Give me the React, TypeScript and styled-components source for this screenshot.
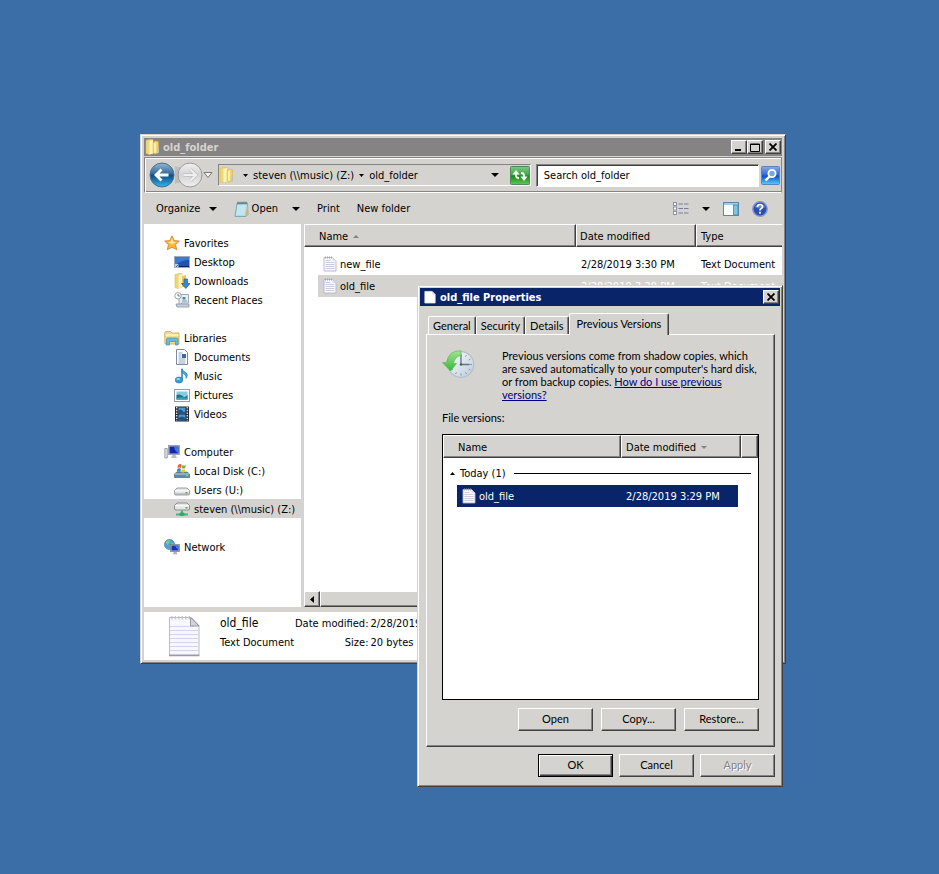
import React from 'react';
import styled, { createGlobalStyle, css } from 'styled-components';

const face = '#d5d3cf';
const ui = "'DejaVu Sans Condensed', 'DejaVu Sans', sans-serif";
const sans = "Lato, 'Liberation Sans', sans-serif";

const GlobalStyle = createGlobalStyle`
  * { box-sizing: border-box; }
  body { margin: 0; background: #3b6ea7; }
  button, input { font: inherit; color: inherit; }
  svg { display: block; flex: none; }
`;

const raised = css`
  border: 1px solid;
  border-color: #fff #404040 #404040 #fff;
  box-shadow: inset -1px -1px 0 #858384;
`;

/* ---------- desktop and window frames ---------- */

const Desktop = styled.main`
  position: relative;
  min-height: 100vh;
  background: #3b6ea7;
  overflow: hidden;
  font: 11px/13px ${ui};
  color: #000;
`;

const Frame = styled.section`
  position: absolute;
  display: flex;
  flex-direction: column;
  padding: 2px;
  background: ${face};
  border: 1px solid;
  border-color: ${face} #404040 #404040 ${face};
  box-shadow: inset 1px 1px 0 #fff, inset -1px -1px 0 #858384;
`;

const ExplorerFrame = styled(Frame)`
  top: 134px;
  left: 140px;
  right: 153px;
  padding: 3px;
`;

const DialogFrame = styled(Frame)`
  top: 285px;
  left: 417px;
  right: 156px;
`;

const TitleBar = styled.header<{ $active?: boolean }>`
  display: flex;
  align-items: center;
  gap: ${(p) => (p.$active ? 4 : 2)}px;
  height: 18px;
  padding: 0 1px 0 ${(p) => (p.$active ? 4 : 1)}px;
  background: ${(p) => (p.$active ? '#0a246a' : '#858384')};
  color: ${(p) => (p.$active ? '#fff' : '#d5d3cf')};
`;

const Title = styled.h1`
  flex: 1;
  margin: 0;
  padding-top: 1px;
  font: bold 11px/14px ${ui};
`;

const CaptionGroup = styled.div`
  display: flex;
`;

const CaptionButton = styled.button`
  ${raised}
  display: flex;
  align-items: center;
  justify-content: center;
  width: 16px;
  height: 14px;
  padding: 0;
  background: ${face};
  color: #000;
  & + & + & { margin-left: 2px; }
`;

/* ---------- explorer bars ---------- */

const NavBand = styled.div`
  display: flex;
  align-items: center;
  height: 36px;
  margin-top: 1px;
  padding: 0 1px 0 4px;
  border: 1px solid;
  border-color: #858384 #858384 #fff #858384;
  box-shadow: inset 1px 1px 0 #fff, inset 0 -1px 0 #858384;
`;

const PlainButton = styled.button`
  display: flex;
  align-items: center;
  gap: 2px;
  padding: 0;
  border: 0;
  background: none;
`;

const HistoryButtons = styled.div`
  display: flex;
  align-items: center;
  width: 69px;
`;

const AddressBar = styled.div`
  display: flex;
  align-items: center;
  flex: 60 1 0;
  min-width: 0;
  height: 22px;
  border: 1px solid;
  border-color: #858384 #fff #fff #858384;
`;

const Crumbs = styled.nav`
  display: flex;
  align-items: center;
  flex: 1;
  gap: 5px;
  padding-left: 8px;
  white-space: nowrap;
`;

const Crumb = styled.a`
  color: inherit;
  text-decoration: none;
`;

const Dropper = styled(PlainButton)`
  margin-right: 11px;
`;

const SearchBox = styled.input`
  flex: 40 1 0;
  min-width: 0;
  height: 23px;
  margin: 0 2px 0 5px;
  padding: 0 7px;
  border: 1px solid;
  border-color: #858384 #fff #fff #858384;
  border-radius: 0;
  outline: 0;
  background: #fff;
  box-shadow: inset 1px 1px 0 #404040;
  &::placeholder { color: #000; opacity: 1; }
`;

const CommandBar = styled.div`
  display: flex;
  align-items: center;
  height: 31px;
  padding: 0 14px 0 12px;
`;

const CommandGroup = styled.div`
  display: flex;
  flex: 1;
  align-items: center;
  gap: 17px;
`;

const SplitButton = styled.div`
  display: flex;
  gap: 14px;
`;

const ViewGroup = styled.div`
  display: flex;
  align-items: center;
  gap: 13px;
`;

/* ---------- explorer body ---------- */

const Body = styled.div`
  display: flex;
  gap: 3px;
  min-height: 383px;
`;

const NavPane = styled.nav`
  flex: none;
  width: 157px;
  padding: 9px 0;
  background: #fff;
`;

const NavGroup = styled.ul`
  margin: 0 0 19px;
  padding: 0;
  list-style: none;
`;

const NavItem = styled.a<{ $child?: boolean; $selected?: boolean }>`
  display: flex;
  align-items: center;
  gap: 4px;
  height: 19px;
  padding-left: ${(p) => (p.$child ? 30 : 20)}px;
  background: ${(p) => (p.$selected ? face : 'none')};
  color: inherit;
  text-decoration: none;
  white-space: nowrap;
`;

const NavLabel = styled.span`
  padding-top: 2px;
`;

const FilePane = styled.div`
  display: flex;
  flex: 1;
  flex-direction: column;
  justify-content: space-between;
  min-width: 0;
  overflow: hidden;
  background: #fff;
`;

const FileTable = styled.table`
  width: 100%;
  border-collapse: separate;
  border-spacing: 0;
  table-layout: fixed;
  tbody::before { content: ''; display: block; height: 6px; }
`;

const Column = styled.col<{ $width?: number }>`
  width: ${(p) => (p.$width ? p.$width + 'px' : 'auto')};
`;

const HeadCell = styled.th<{ $indent?: number; $open?: boolean }>`
  height: 23px;
  padding: 2px 0 0 ${(p) => p.$indent ?? 4}px;
  border: solid;
  border-width: 1px ${(p) => (p.$open ? 0 : 1)}px 1px 1px;
  border-color: #fff #404040 #404040 #fff;
  background: ${face};
  box-shadow: inset ${(p) => (p.$open ? 0 : -1)}px -1px 0 #858384;
  font-weight: normal;
  text-align: left;
  white-space: nowrap;
`;

const HeadLabel = styled.span`
  display: flex;
  align-items: center;
  gap: 5px;
`;

const Cell = styled.td<{ $selected?: boolean; $faded?: boolean }>`
  height: 22px;
  padding: 0 0 0 5px;
  background: ${(p) => (p.$selected ? face : 'none')};
  color: ${(p) => (p.$faded ? '#fff' : '#000')};
  white-space: nowrap;
`;

const FileName = styled.span`
  display: flex;
  align-items: center;
  gap: 3px;
`;

const ScrollBar = styled.div`
  display: flex;
  height: 16px;
  background: #eae9e6;
`;

const ScrollButton = styled(CaptionButton)`
  height: 16px;
`;

const ScrollThumb = styled.div`
  ${raised}
  width: 300px;
  background: ${face};
`;

const Details = styled.footer`
  display: flex;
  align-items: flex-start;
  min-height: 48px;
  margin-top: 5px;
  padding: 3px 0 3px 24px;
  background: #fff;
`;

const DetailName = styled.div`
  display: flex;
  flex-direction: column;
  gap: 4px;
  width: 75px;
  margin-left: 19px;
  padding-top: 1px;
  line-height: 15px;
  white-space: nowrap;
`;

const DetailTitle = styled.strong`
  font-size: 12px;
  font-weight: normal;
`;

const DetailFacts = styled.dl`
  display: grid;
  grid-template-columns: auto auto;
  gap: 4px 2px;
  margin: 0;
  padding-top: 1px;
  line-height: 15px;
  white-space: nowrap;
`;

const Fact = styled.dt`
  text-align: right;
`;

const FactValue = styled.dd`
  margin: 0;
`;

/* ---------- properties dialog ---------- */

const DialogBody = styled.div`
  display: flex;
  flex-direction: column;
  padding: 7px 5px 7px 6px;
  font: 11px/13px ${sans};
`;

const Tabs = styled.div`
  display: flex;
  align-items: flex-end;
  padding-left: 2px;
`;

const Tab = styled.button<{ $active?: boolean }>`
  position: relative;
  height: ${(p) => (p.$active ? 22 : 18)}px;
  margin-bottom: ${(p) => (p.$active ? -1 : 0)}px;
  padding: 0 ${(p) => (p.$active ? 7 : 4)}px ${(p) => (p.$active ? 2 : 0)}px;
  border: solid;
  border-width: 1px 1px 0;
  border-color: #fff #404040 #fff #fff;
  border-radius: 2px 2px 0 0;
  background: ${face};
  box-shadow: inset -1px 0 0 #858384;
  white-space: nowrap;
`;

const Sheet = styled.div`
  ${raised}
  display: flex;
  flex-direction: column;
  padding: 14px 15px 15px;
`;

const Intro = styled.div`
  display: flex;
  align-items: flex-start;
  gap: 27px;
`;

const IntroText = styled.p`
  flex: 1;
  margin: 0;
`;

const HelpLink = styled.a`
  color: #00007f;
`;

const ListLabel = styled.h2`
  margin: 10px 0;
  font: inherit;
`;

const VersionBox = styled.div`
  min-height: 266px;
  border: 1px solid #000;
  background: #fff;
  font-family: ${ui};
`;

const VersionTable = styled.table`
  width: 100%;
  border-collapse: separate;
  border-spacing: 0;
  table-layout: fixed;
`;

const GroupCell = styled.td`
  height: 27px;
  padding: 4px 7px 0 7px;
`;

const GroupLabel = styled.div`
  display: flex;
  align-items: center;
  gap: 5px;
  white-space: nowrap;
`;

const GroupRule = styled.hr`
  flex: 1;
  margin: 0 0 0 3px;
  border: 0;
  border-top: 1px solid #000;
`;

const VersionCell = styled.td<{ $picked?: boolean }>`
  height: 22px;
  padding: 0 0 0 5px;
  background: ${(p) => (p.$picked ? '#0a246a' : 'none')};
  color: #fff;
  white-space: nowrap;
`;

const Actions = styled.div<{ $outer?: boolean }>`
  display: flex;
  justify-content: flex-end;
  gap: ${(p) => (p.$outer ? 6 : 8)}px;
  margin-top: ${(p) => (p.$outer ? 7 : 8)}px;
`;

const PushButton = styled.button<{ $default?: boolean }>`
  ${raised}
  width: 75px;
  height: 23px;
  padding: 0 0 2px;
  background: ${face};
  ${(p) => p.$default && css`
    border-color: #000;
    box-shadow: inset 1px 1px 0 #fff, inset -1px -1px 0 #404040, inset -2px -2px 0 #858384;
  `}
  &:disabled {
    color: #858384;
    text-shadow: 1px 1px 0 #fff;
  }
`;

/* ---------- icons ---------- */

const Triangle = ({ size = 7, up, color = '#000' }: { size?: number; up?: boolean; color?: string }) => {
  const h = Math.ceil(size / 2);
  return (
    <svg width={size} height={h} viewBox={`0 0 ${size} ${h}`} aria-hidden>
      <path d={up ? `M0 ${h}H${size}L${size / 2} 0Z` : `M0 0H${size}L${size / 2} ${h}Z`} fill={color} />
    </svg>
  );
};

const CloseGlyph = () => (
  <svg width="8" height="8" viewBox="0 0 8 8" aria-hidden>
    <path d="M0.5 0.5 7.5 7.5M7.5 0.5 0.5 7.5" stroke="#000" strokeWidth="1.8" />
  </svg>
);

const FolderIcon = () => (
  <svg width="16" height="16" viewBox="0 0 16 16" aria-hidden>
    <path d="M1 1.500 4 .500h4v14l-4 1-3-1z" fill="#f0d776" stroke="#d9bb5c" strokeWidth=".5" />
    <path d="M4.500 2 8 1v13.500l-3.500 1z" fill="#fff3b8" />
    <path d="M8 3.500 10.500 2 13.500 2.600V14L10 15 8 14z" fill="#f0d272" stroke="#d3b14c" strokeWidth=".5" />
    <path d="M9 4.500 11 3v10.500L9 14z" fill="#fff0a4" />
    <path d="M12.500 8.500h1.500v5h-1.500z" fill="#a9c7b8" />
  </svg>
);

const PageIcon = ({ blank }: { blank?: boolean }) => (
  <svg width={blank ? 12 : 14} height={blank ? 14 : 16} viewBox="0 0 14 16" aria-hidden>
    <path d="M1 1.500h8.500l3.500 3.500v10H1z" fill={blank ? '#fff' : '#fafaff'} stroke={blank ? '#e8eaf6' : '#b4b3c0'} strokeWidth=".9" />
    {!blank && <path d="M2.500 6.500h9M2.500 8.500h9M2.500 10.500h9M2.500 12.500h9M2.500 4.500h5" stroke="#c3c6dd" strokeWidth=".9" />}
    {!blank && <path d="M2 1.500h8" stroke="#a3a3aa" strokeDasharray="1 1" strokeWidth="2" />}
    <path d="M9.500 1.500v3.500h3.500z" fill="#dfe1ec" />
  </svg>
);

const BigPageIcon = () => (
  <svg width="33" height="42" viewBox="0 0 33 42" aria-hidden>
    <path d="M1.500 2.500h22l7.500 8V40H1.500z" fill="#f8f7ff" stroke="#bdbccd" />
    <path d="M1 40.500h30.500" stroke="#9a99ab" strokeWidth="1.500" />
    <path d="M2 11.500h24M2 15.500h28M2 19.500h28M2 23.500h28M2 27.500h28M2 31.500h28M2 35.500h28" stroke="#d3d4ec" />
    <path d="M22.500 2.500 31 11H22.500z" fill="#d2d2da" stroke="#8b8b96" strokeWidth=".8" />
    <path d="M3 2.500h19" stroke="#b9b9c1" strokeWidth="2.500" strokeDasharray="1.500 2" />
    <path d="M3 4.200h19" stroke="#dedee5" strokeDasharray="2 1.500" />
  </svg>
);

const NotepadIcon = () => (
  <svg width="16" height="16" viewBox="0 0 16 16" aria-hidden>
    <path d="M3 2.500 13.500 2 14 13.500 12 15.500H1z" fill="#aedde9" stroke="#6f9fad" strokeWidth=".8" />
    <path d="M13.500 3 14 14 11 15.500z" fill="#d9b46c" />
    <path d="M3.500 5h8.500M3.200 7h8.500M3 9h8.500M2.600 11h8.500M2.300 13h8" stroke="#e2f5fa" strokeWidth=".8" />
    <path d="M3.500 2h10" stroke="#46555b" strokeWidth="2.400" strokeDasharray="1 1" />
  </svg>
);

const BackIcon = () => (
  <svg width="26" height="26" viewBox="0 0 26 26" aria-hidden>
    <defs>
      <linearGradient id="back" x2="0" y2="1">
        <stop offset="0" stopColor="#93b7d0" />
        <stop offset=".46" stopColor="#316a9b" />
        <stop offset=".5" stopColor="#0b4a84" />
        <stop offset="1" stopColor="#35b6ea" />
      </linearGradient>
    </defs>
    <circle cx="13" cy="13" r="12" fill="url(#back)" stroke="#4d6d8a" />
    <path d="M7 13h12.500M12.500 7.500 7 13l5.500 5.500" fill="none" stroke="#fff" strokeWidth="2.800" />
  </svg>
);

const ForwardIcon = () => (
  <svg width="28" height="26" viewBox="0 0 28 26" aria-hidden>
    <defs>
      <linearGradient id="fwd" x2="0" y2="1">
        <stop offset="0" stopColor="#f0f0f0" />
        <stop offset=".5" stopColor="#d4d4d5" />
        <stop offset="1" stopColor="#f0f0f0" />
      </linearGradient>
    </defs>
    <path d="M0 4Q5 7 9 3L14 1V25L9 23Q5 19 0 22Z" fill="#bdbdbf" />
    <circle cx="15" cy="13" r="12" fill="url(#fwd)" stroke="#9a9a9e" />
    <path d="M8.500 13h12.500M15.500 7.500 21 13l-5.500 5.500" fill="none" stroke="#bdbdbd" strokeWidth="3.400" />
    <path d="M8.500 13h12.500M15.500 7.500 21 13l-5.500 5.500" fill="none" stroke="#efefef" strokeWidth="2.200" />
  </svg>
);

const HistoryIcon = () => (
  <svg width="10" height="8" viewBox="0 0 10 8" aria-hidden>
    <path d="M1 1.500h8L5 6.500z" fill="#f4f4f4" stroke="#77777a" />
  </svg>
);

const RefreshIcon = () => (
  <svg width="20" height="19" viewBox="0 0 20 19" aria-hidden>
    <defs>
      <linearGradient id="refresh" x2="0" y2="1">
        <stop offset="0" stopColor="#7fc883" />
        <stop offset=".48" stopColor="#3fa645" />
        <stop offset=".52" stopColor="#14891b" />
        <stop offset="1" stopColor="#62c94d" />
      </linearGradient>
    </defs>
    <rect x=".5" y=".5" width="19" height="18" rx="1" fill="url(#refresh)" stroke="#50885a" />
    <path d="M2.500 8.500 6 4l3.500 4.500z" fill="#fff" />
    <path d="M6 8v1.500q0 2.500 3 2.500M14 11V9.500Q14 7 11 7" stroke="#fff" strokeWidth="1.800" fill="none" />
    <path d="M10.500 10.500h7L14 15z" fill="#fff" />
  </svg>
);

const SearchIcon = () => (
  <svg width="19" height="19" viewBox="0 0 19 19" aria-hidden>
    <defs>
      <linearGradient id="search" x2="0" y2="1">
        <stop offset="0" stopColor="#84aeeb" />
        <stop offset=".48" stopColor="#2e66d4" />
        <stop offset=".52" stopColor="#124bc5" />
        <stop offset="1" stopColor="#50d6fb" />
      </linearGradient>
    </defs>
    <rect x=".5" y=".5" width="18" height="18" rx="1" fill="url(#search)" stroke="#5c83b8" />
    <circle cx="11" cy="7.500" r="3.600" fill="#7aa4ea" stroke="#fff" strokeWidth="1.800" />
    <path d="M8.500 10.500 4.500 14.500" stroke="#fff" strokeWidth="2.400" />
  </svg>
);

const ViewIcon = () => (
  <svg width="16" height="14" viewBox="0 0 16 14" aria-hidden>
    {[1, 5.5, 10].map((y) => (
      <g key={y}>
        <rect x=".5" y={y - 0.5} width="3" height="3" fill="#fff" stroke="#8a90a5" />
        <path d={`M5.500 ${y + 1}h4.500M11 ${y + 1}h4.500`} stroke="#77809a" strokeWidth="1.200" />
      </g>
    ))}
  </svg>
);

const PreviewIcon = () => (
  <svg width="16" height="14" viewBox="0 0 16 14" aria-hidden>
    <rect x=".5" y=".5" width="15" height="13" fill="#fff" stroke="#5b87aa" />
    <path d="M1 2h14" stroke="#a9cbe2" strokeWidth="2" />
    <rect x="10.500" y="3" width="4.500" height="10" fill="#7fc5dd" stroke="#4588ac" strokeWidth=".8" />
  </svg>
);

const HelpIcon = () => (
  <svg width="16" height="16" viewBox="0 0 16 16" aria-hidden>
    <circle cx="8" cy="8" r="7.200" fill="#2a4fae" stroke="#8798c5" strokeWidth="1.500" />
    <path d="M2.500 6a6 5 0 0 1 11 0Q8 9 2.500 6z" fill="#6285cf" />
    <path d="M5.500 6q0-2.500 2.500-2.500t2.500 2.200q0 1.300-1.500 2.100-1 .5-1 1.700" fill="none" stroke="#fff" strokeWidth="1.700" />
    <rect x="7.100" y="10.800" width="1.800" height="1.800" fill="#fff" />
  </svg>
);

const art: Record<string, React.ReactNode> = {
  star: (
    <>
      <path d="M8 .8 10.200 5.600 15.400 6.100 11.500 9.600 12.700 14.800 8 12.100 3.300 14.800 4.500 9.600.6 6.100 5.800 5.600z" fill="#fcb93b" stroke="#d5822a" strokeWidth=".9" />
      <path d="M8 3 9.300 6.800 12.500 7.300 8 9 4 7.200 6.800 6.600z" fill="#ffe8a0" />
    </>
  ),
  desktop: (
    <>
      <rect x=".5" y="2.500" width="15" height="11" fill="#2450ae" stroke="#9ca9bf" />
      <path d="M1 3h14v3Q8 6 1 11z" fill="#3a7bd0" />
      <path d="M1 12.500h14" stroke="#0d2452" />
      <path d="M1 10h3.500v3.500H1z" fill="#b7cdec" />
      <path d="M2 13 4.500 10.500" stroke="#3969a6" />
    </>
  ),
  downloads: (
    <>
      <path d="M1 1.500 5 .6h3V14l-4 1.500-3-1z" fill="#f2d675" stroke="#d9bb5c" strokeWidth=".6" />
      <path d="M4.500 2 8 1v13l-3.500 1.500z" fill="#fff2b5" />
      <path d="M8 3 12 2v12H8z" fill="#e9c65f" />
      <path d="M10 6h3.500v4.500H16L11.800 15.500 7.500 10.500H10z" fill="#3c87ce" stroke="#1e5c9d" strokeWidth=".7" />
    </>
  ),
  recent: (
    <>
      <path d="M5 2.500h9.500V11h-7V14H5z" fill="#e7edf3" stroke="#8795a3" strokeWidth=".8" />
      <circle cx="4" cy="3.800" r="3.200" fill="#fff" stroke="#8c979f" strokeWidth=".9" />
      <path d="M4 2v2h1.800" stroke="#556" fill="none" strokeWidth=".8" />
      <path d="M8.500 5h3v2.500h-3z" fill="#4588b8" />
      <path d="M8 9h5" stroke="#7c90a3" />
      <path d="M2 12h13v3H3z" fill="#c8d1d9" stroke="#8795a3" strokeWidth=".8" />
    </>
  ),
  libraries: (
    <>
      <path d="M.6 3 1.500 1.500h5L8 3h7v11H1z" fill="#f2dc88" stroke="#c9a84c" strokeWidth=".8" />
      <path d="M1.500 5h13" stroke="#fff6cb" strokeWidth="1.500" />
      <path d="M2.500 15V9.500Q2.500 8 4 8h8.500q1.500 0 1.500 1.500V15h-2.500v-3.500h-6V15z" fill="#6bbadb" stroke="#3f8cb6" strokeWidth=".7" />
    </>
  ),
  documents: (
    <>
      <path d="M2.500.5h8L13.500 3.500v12h-11z" fill="#fff" stroke="#7e8ca2" />
      <path d="M4.500 4h4M4.500 6h3M4.500 8h3M4.500 10h7M4.500 12h7M4.500 14h7" stroke="#91a6c0" />
      <rect x="8" y="5" width="4" height="4" fill="#386aa5" />
    </>
  ),
  music: (
    <>
      <path d="M8 1v10.500" stroke="#2581c6" strokeWidth="1.500" />
      <path d="M8 .5q1 3 4.500 4.500Q14.500 7 12 10.500 12.500 6.500 8 5z" fill="#49a5db" stroke="#1f6da6" strokeWidth=".5" />
      <ellipse cx="5" cy="12" rx="3.800" ry="3" fill="#3a9ddb" stroke="#1c6bad" strokeWidth=".6" />
      <ellipse cx="4.200" cy="11" rx="1.800" ry="1" fill="#a6dcf5" />
    </>
  ),
  pictures: (
    <>
      <rect x=".5" y="2.500" width="15" height="12" fill="#fff" stroke="#8f9bab" />
      <rect x="2.500" y="4.500" width="11" height="8" fill="#84cbe5" />
      <path d="M2.500 8Q6 6.500 8.500 9t5-1.200v4.700h-11z" fill="#1d7082" />
      <path d="M2.500 11q5-1.500 11 0v1.500h-11z" fill="#3ba0b4" />
    </>
  ),
  videos: (
    <>
      <rect x="1" y=".5" width="14" height="15" fill="#1e242e" />
      <path d="M2.700 1v14M13.300 1v14" stroke="#dbe0e5" strokeWidth="1.500" strokeDasharray="1.500 1.200" />
      <path d="M4.500 1.500h7v6h-7zM4.500 8.500h7v6h-7z" fill="#4d9ad0" />
      <path d="M4.500 5q2-3 4 0t3-1v3.500h-7zM4.500 12q3-3 7 0v2.500h-7z" fill="#23517f" />
    </>
  ),
  computer: (
    <>
      <path d="M.8 4.500h2.500V14H.8z" fill="#dde2e5" stroke="#82898d" strokeWidth=".7" />
      <rect x="4.500" y="1.500" width="11" height="9" fill="#bcc6d0" stroke="#7f8b97" strokeWidth=".7" />
      <rect x="5.500" y="2.500" width="9" height="7" fill="#1427a8" />
      <path d="M10 2.500h4.500V9Q11 8 10 2.500z" fill="#4673dd" />
      <path d="M8.500 11h3l1.500 3H7z" fill="#b9c0c5" />
    </>
  ),
  local: (
    <>
      <path d="M3 9h10l2.500 2v3.500H.5V11z" fill="#638ba3" stroke="#48687c" strokeWidth=".7" />
      <path d="M1 11h14" stroke="#b9d3e1" />
      <path d="M4 2Q6 .5 7.500 1.500L7 5Q5.500 4 3.500 5z" fill="#ec6235" />
      <path d="M8.300 2q2 1 3.500 0L11.300 5q-2 1-3.500 0z" fill="#77b740" />
      <path d="M3.300 5.800q2-1 3.600 0L6.400 9q-2-1-3.500 0z" fill="#3f87d1" />
      <path d="M7.600 6q2 1 3.600 0l-.5 3q-2 1-3.600 0z" fill="#f6c531" />
      <rect x="12" y="12" width="2" height="1.200" fill="#6ee06b" />
    </>
  ),
  drive: (
    <>
      <path d="M3 6h10l2.500 2.500v3.200q0 1.300-1.500 1.300H2Q.5 13 .5 11.700V8.500z" fill="#e4e5e6" stroke="#848689" strokeWidth=".8" />
      <path d="M1 8.800h14" stroke="#fff" />
      <path d="M1 12h14" stroke="#a1a3a6" />
      <rect x="11.500" y="10" width="2" height="1.500" fill="#4eb457" />
    </>
  ),
  share: (
    <>
      <path d="M3 2h10l2.500 2.500V8q0 1-1.500 1H2Q.5 9 .5 8V4.500z" fill="#e4e5e6" stroke="#77797c" strokeWidth=".8" />
      <path d="M1 4.800h14" stroke="#fff" />
      <rect x="11.500" y="6" width="2" height="1.500" fill="#4eb457" />
      <path d="M8 9.500V13M2 13.500h12" stroke="#45b480" strokeWidth="2" />
      <rect x="5.500" y="11.500" width="5" height="3.500" rx="1" fill="#35a870" />
    </>
  ),
  network: (
    <>
      <circle cx="5.500" cy="5.500" r="5" fill="#4fa5cd" stroke="#2a7297" strokeWidth=".6" />
      <path d="M2 3q2-2.500 4-1.500L5 4 3 6zM6 5l3-1v4L6 9z" fill="#83cc86" />
      <rect x="6.500" y="5.500" width="9" height="7" fill="#b9c5d2" stroke="#6a7889" strokeWidth=".7" />
      <rect x="7.500" y="6.500" width="7" height="5" fill="#1633b4" />
      <path d="M11 6.500h3.500v4.500Q12 10 11 6.500z" fill="#4778de" />
      <path d="M10 13h2.500l1 2.200h-5z" fill="#aab3ba" />
    </>
  ),
};

const NavIcon = ({ name }: { name: string }) => (
  <svg width="16" height="16" viewBox="0 0 16 16" aria-hidden>{art[name]}</svg>
);

const ClockIcon = () => (
  <svg width="33" height="30" viewBox="0 -1 33 30" aria-hidden>
    <defs>
      <linearGradient id="dial" x2="1" y2="1">
        <stop offset="0" stopColor="#ffffff" />
        <stop offset="1" stopColor="#b9cad8" />
      </linearGradient>
      <linearGradient id="arrow" x2="0" y2="1">
        <stop offset="0" stopColor="#a1e593" />
        <stop offset="1" stopColor="#39b735" />
      </linearGradient>
    </defs>
    <circle cx="19" cy="14.500" r="12.800" fill="url(#dial)" stroke="#b3c0cb" strokeWidth="1.200" />
    <path d="M19 3.500v2M19 23.500v2M28 14.500h2M24.500 5l-1 1.700M28.500 9l-1.700 1M28.500 20l-1.700-1M24.500 24l-1-1.700M13.500 24l1-1.700M9.500 20l1.700-1" stroke="#8796a3" />
    <path d="M19 5v9.500h8.500" fill="none" stroke="#5f7382" strokeWidth="1.300" />
    <circle cx="19" cy="14.500" r="1.300" fill="#4d606e" />
    <path d="M19 .8Q7 0 4.500 12.500L.5 12.700 8.500 21 14.500 13.500H11.500Q12.500 7 19 5z" fill="url(#arrow)" stroke="#58b951" strokeWidth=".7" />
  </svg>
);

/* ---------- data ---------- */

const navigation = [
  { icon: 'star', label: 'Favorites', items: [['desktop', 'Desktop'], ['downloads', 'Downloads'], ['recent', 'Recent Places']] },
  { icon: 'libraries', label: 'Libraries', items: [['documents', 'Documents'], ['music', 'Music'], ['pictures', 'Pictures'], ['videos', 'Videos']] },
  { icon: 'computer', label: 'Computer', items: [['local', 'Local Disk (C:)'], ['drive', 'Users (U:)'], ['share', 'steven (\\\\music) (Z:)']] },
  { icon: 'network', label: 'Network', items: [] },
];

const files = [
  { name: 'new_file', date: '2/28/2019 3:30 PM', type: 'Text Document', selected: false },
  { name: 'old_file', date: '2/28/2019 3:29 PM', type: 'Text Document', selected: true },
];

/* ---------- windows ---------- */

const Explorer = () => (
  <ExplorerFrame aria-label="old_folder">
    <TitleBar>
      <FolderIcon />
      <Title>old_folder</Title>
      <CaptionGroup>
        <CaptionButton aria-label="Minimize">
          <svg width="8" height="8" viewBox="0 0 8 8" aria-hidden><path d="M0 7h6" stroke="#000" strokeWidth="2" /></svg>
        </CaptionButton>
        <CaptionButton aria-label="Maximize">
          <svg width="10" height="9" viewBox="0 0 10 9" aria-hidden><path d="M.5 1h9v7.500h-9zM.5 1.500h9" fill="none" stroke="#000" /></svg>
        </CaptionButton>
        <CaptionButton aria-label="Close"><CloseGlyph /></CaptionButton>
      </CaptionGroup>
    </TitleBar>

    <NavBand>
      <HistoryButtons>
        <PlainButton aria-label="Back"><BackIcon /></PlainButton>
        <PlainButton aria-label="Forward"><ForwardIcon /></PlainButton>
        <PlainButton aria-label="Recent pages"><HistoryIcon /></PlainButton>
      </HistoryButtons>
      <AddressBar>
        <FolderIcon />
        <Crumbs aria-label="Address">
          <Triangle size={5} />
          <Crumb href="#music">steven (\\music) (Z:)</Crumb>
          <Triangle size={5} />
          <Crumb href="#old_folder">old_folder</Crumb>
        </Crumbs>
        <Dropper aria-label="Previous locations"><Triangle size={8} /></Dropper>
        <PlainButton aria-label="Refresh"><RefreshIcon /></PlainButton>
      </AddressBar>
      <SearchBox type="text" aria-label="Search" placeholder="Search old_folder" />
      <PlainButton aria-label="Search"><SearchIcon /></PlainButton>
    </NavBand>

    <CommandBar>
      <CommandGroup>
        <PlainButton>Organize&nbsp;&nbsp;<Triangle size={8} /></PlainButton>
        <SplitButton>
          <PlainButton><NotepadIcon />Open</PlainButton>
          <PlainButton aria-label="Open with"><Triangle size={8} /></PlainButton>
        </SplitButton>
        <PlainButton>Print</PlainButton>
        <PlainButton>New folder</PlainButton>
      </CommandGroup>
      <ViewGroup>
        <PlainButton aria-label="Change view"><ViewIcon /></PlainButton>
        <PlainButton aria-label="More views"><Triangle size={8} /></PlainButton>
        <PlainButton aria-label="Preview pane"><PreviewIcon /></PlainButton>
        <PlainButton aria-label="Help"><HelpIcon /></PlainButton>
      </ViewGroup>
    </CommandBar>

    <Body>
      <NavPane aria-label="Folders">
        {navigation.map((group) => (
          <NavGroup key={group.label}>
            <li>
              <NavItem href="#group"><NavIcon name={group.icon} /><NavLabel>{group.label}</NavLabel></NavItem>
            </li>
            {group.items.map(([icon, label]) => (
              <li key={label}>
                <NavItem href="#place" $child $selected={icon === 'share'}>
                  <NavIcon name={icon} /><NavLabel>{label}</NavLabel>
                </NavItem>
              </li>
            ))}
          </NavGroup>
        ))}
      </NavPane>
      <FilePane>
        <FileTable>
          <colgroup><Column $width={14} /><Column $width={258} /><Column $width={120} /><Column /></colgroup>
          <thead>
            <tr>
              <HeadCell colSpan={2} $indent={14}><HeadLabel>Name<Triangle size={6} up color="#858384" /></HeadLabel></HeadCell>
              <HeadCell $indent={3}>Date modified</HeadCell>
              <HeadCell $open>Type</HeadCell>
            </tr>
          </thead>
          <tbody>
            {files.map((f) => (
              <tr key={f.name}>
                <Cell />
                <Cell $selected={f.selected}><FileName><PageIcon />{f.name}</FileName></Cell>
                <Cell $selected={f.selected} $faded={f.selected}>{f.date}</Cell>
                <Cell $selected={f.selected} $faded={f.selected}>{f.type}</Cell>
              </tr>
            ))}
          </tbody>
        </FileTable>
        <ScrollBar>
          <ScrollButton aria-label="Scroll left">
            <svg width="4" height="7" viewBox="0 0 4 7" aria-hidden><path d="M4 0v7L0 3.500z" /></svg>
          </ScrollButton>
          <ScrollThumb />
        </ScrollBar>
      </FilePane>
    </Body>

    <Details>
      <BigPageIcon />
      <DetailName>
        <DetailTitle>old_file</DetailTitle>
        <span>Text Document</span>
      </DetailName>
      <DetailFacts>
        <Fact>Date modified:</Fact><FactValue>2/28/2019 3:29 PM</FactValue>
        <Fact>Size:</Fact><FactValue>20 bytes</FactValue>
      </DetailFacts>
    </Details>
  </ExplorerFrame>
);

const Properties = () => (
  <DialogFrame role="dialog" aria-label="old_file Properties">
    <TitleBar $active>
      <PageIcon blank />
      <Title>old_file Properties</Title>
      <CaptionButton aria-label="Close"><CloseGlyph /></CaptionButton>
    </TitleBar>
    <DialogBody>
      <Tabs role="tablist">
        <Tab role="tab">General</Tab>
        <Tab role="tab">Security</Tab>
        <Tab role="tab">Details</Tab>
        <Tab role="tab" aria-selected $active>Previous Versions</Tab>
      </Tabs>
      <Sheet role="tabpanel">
        <Intro>
          <ClockIcon />
          <IntroText>
            Previous versions come from shadow copies, which are saved automatically to your computer's hard disk, or from
            backup copies. <HelpLink href="#help">How do I use previous versions?</HelpLink>
          </IntroText>
        </Intro>
        <ListLabel>File versions:</ListLabel>
        <VersionBox>
          <VersionTable aria-label="File versions">
            <colgroup><Column $width={14} /><Column $width={164} /><Column /><Column $width={3} /><Column $width={17} /></colgroup>
            <thead>
              <tr>
                <HeadCell colSpan={2} $indent={14}>Name</HeadCell>
                <HeadCell colSpan={2}><HeadLabel>Date modified<Triangle size={6} color="#858384" /></HeadLabel></HeadCell>
                <HeadCell aria-label="More" />
              </tr>
            </thead>
            <tbody>
              <tr>
                <GroupCell colSpan={5}>
                  <GroupLabel><Triangle size={5} up />Today (1)<GroupRule /></GroupLabel>
                </GroupCell>
              </tr>
              <tr>
                <VersionCell />
                <VersionCell $picked><FileName><PageIcon />old_file</FileName></VersionCell>
                <VersionCell $picked>2/28/2019 3:29 PM</VersionCell>
                <VersionCell />
                <VersionCell />
              </tr>
            </tbody>
          </VersionTable>
        </VersionBox>
        <Actions>
          <PushButton>Open</PushButton>
          <PushButton>Copy...</PushButton>
          <PushButton>Restore...</PushButton>
        </Actions>
      </Sheet>
      <Actions $outer>
        <PushButton $default>OK</PushButton>
        <PushButton>Cancel</PushButton>
        <PushButton disabled>Apply</PushButton>
      </Actions>
    </DialogBody>
  </DialogFrame>
);

export default function App() {
  return (
    <>
      <GlobalStyle />
      <Desktop>
        <Explorer />
        <Properties />
      </Desktop>
    </>
  );
}
